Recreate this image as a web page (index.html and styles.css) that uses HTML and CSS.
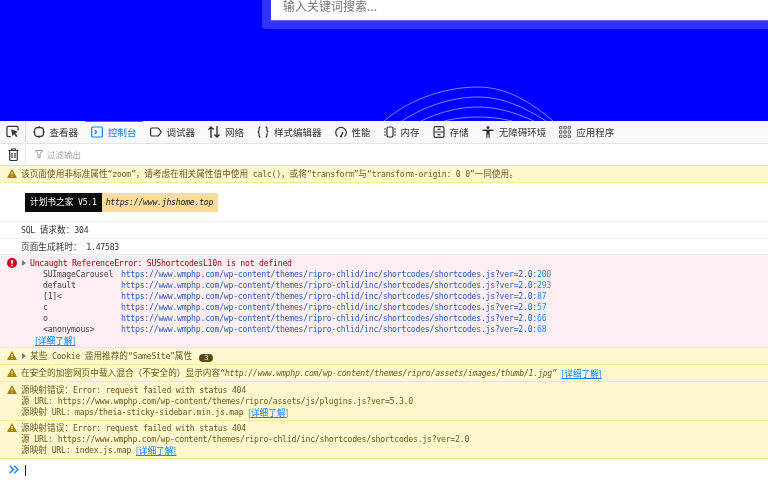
FILE: index.html
```html
<!DOCTYPE html>
<html lang="zh-CN">
<head>
<meta charset="utf-8">
<title>控制台</title>
<link rel="stylesheet" href="styles.css">
</head>
<body>
<section class="hero">
  <div class="search-band"><div class="search-box">输入关键词搜索...</div></div>
  <svg class="arcs" viewBox="0 0 180 36" width="180" height="36" fill="none">
    <path d="M0 36 C28 12 65 2 94 2 C123 2 148 18 169 36"/>
    <path d="M18 36 C42 20 70 12 94 12 C118 12 140 22 162 36"/>
    <path d="M37 36 C55 27 76 22 94 22 C112 22 130 27 150 36"/>
    <path d="M60 36 C72 33 84 32 94 32 C104 32 116 33 128 36"/>
  </svg>
</section>

<nav class="tabs">
  <div class="picker">
    <svg class="ic" viewBox="0 0 14 14" fill="none" stroke="#333" stroke-width="1.3"><path d="M5 12.5H2.5a1.5 1.5 0 0 1-1.5-1.5V3a1.5 1.5 0 0 1 1.5-1.5h9A1.5 1.5 0 0 1 13 3v3"/><path d="M5.5 4.5l7.5 3-3 1.2 2.5 3.3-1.5 1-2.3-3.3-1.7 2.3z" fill="#333" stroke="none"/></svg>
  </div>
  <div class="tab"><svg class="ic" viewBox="0 0 12 12" fill="none" stroke="#333" stroke-width="1.2"><rect x="1.6" y="1.6" width="8.8" height="8.8" rx="2.6"/><path d="M6 0v1.6M6 10.4V12M0 6h1.6M10.4 6H12"/></svg><span>查看器</span></div>
  <div class="tab on"><svg class="ic" viewBox="0 0 12 12" fill="none" stroke="#0a84ff" stroke-width="1.2"><rect x=".6" y="1" width="10.8" height="10" rx="1.6"/><path d="M3.6 4l2 2-2 2"/></svg><span>控制台</span></div>
  <div class="tab"><svg class="ic" viewBox="0 0 12 12" fill="none" stroke="#333" stroke-width="1.2"><path d="M1.8 2h5.7a1.5 1.5 0 0 1 1.1.5L11.2 6 8.6 9.5a1.5 1.5 0 0 1-1.1.5H1.8A1.2 1.2 0 0 1 .6 8.8V3.2A1.2 1.2 0 0 1 1.8 2z"/></svg><span>调试器</span></div>
  <div class="tab"><svg class="ic" viewBox="0 0 12 12" fill="none" stroke="#333" stroke-width="1.4"><path d="M3 12V1M.4 3.6L3 1l2.6 2.6M9 0v11M6.4 8.4L9 11l2.6-2.6"/></svg><span>网络</span></div>
  <div class="tab"><svg class="ic" viewBox="0 0 12 12" fill="none" stroke="#333" stroke-width="1.2"><path d="M3.5.8C2 .8 2 1.8 2 3v1.6C2 5.4 1.4 6 .6 6c.8 0 1.4.6 1.4 1.4V9c0 1.2 0 2.2 1.5 2.2M8.5.8C10 .8 10 1.8 10 3v1.6c0 .8.6 1.4 1.4 1.4-.8 0-1.4.6-1.4 1.4V9c0 1.2 0 2.2-1.5 2.2"/></svg><span>样式编辑器</span></div>
  <div class="tab"><svg class="ic" viewBox="0 0 12 12" fill="none" stroke="#333" stroke-width="1.2"><path d="M2.4 10.6A5.3 5.3 0 1 1 9.6 10.6"/><path d="M6 10.4L7.8 6" stroke-width="1.4"/><circle cx="6" cy="10.4" r="1" fill="#333" stroke="none"/></svg><span>性能</span></div>
  <div class="tab"><svg class="ic" viewBox="0 0 12 12" fill="none" stroke="#333" stroke-width="1.2"><rect x="3" y="1" width="6" height="10" rx="1.6"/><path d="M0 3h2M0 6h2M0 9h2M10 3h2M10 6h2M10 9h2" stroke-width=".9"/></svg><span>内存</span></div>
  <div class="tab"><svg class="ic" viewBox="0 0 12 12" fill="none" stroke="#333" stroke-width="1.2"><rect x="1" y=".6" width="10" height="10.8" rx="1.6"/><path d="M1 6h10M4.5 3.3h3M4.5 8.7h3"/></svg><span>存储</span></div>
  <div class="tab"><svg class="ic" viewBox="0 0 12 12" fill="#333"><circle cx="6" cy="1.6" r="1.5"/><path d="M.6 3.6h10.8v1.3H7.6V12H6.5V8.4h-1V12H4.4V4.9H.6z"/></svg><span>无障碍环境</span></div>
  <div class="tab"><svg class="ic" viewBox="0 0 12 12" fill="none" stroke="#666" stroke-width="1"><path d="M.5.5h2.4v2.4H.5zM4.8.5h2.4v2.4H4.8zM9.1.5h2.4v2.4H9.100zM.5 4.800h2.400v2.400H.5zM4.800 4.800h2.400v2.400H4.800zM9.100 4.800h2.400v2.400H9.100zM.5 9.100h2.400v2.400H.5zM4.800 9.100h2.400v2.400H4.800zM9.100 9.100h2.400v2.400H9.100z"/></svg><span>应用程序</span></div>
</nav>

<div class="filterbar">
  <div class="trash">
    <svg width="11" height="13" viewBox="0 0 11 13" fill="none" stroke="#333" stroke-width="1.2"><path d="M.5 2.500h10M3.500 2.500V1h4v1.500M1.700 2.500v8.800a1.200 1.200 0 0 0 1.200 1.200h5.200a1.200 1.200 0 0 0 1.200-1.200V2.500M4 5v5M7 5v5"/></svg>
  </div>
  <div class="filter">
    <svg width="8" height="9" viewBox="0 0 8 9" fill="none" stroke="#999" stroke-width="1"><path d="M.5.500h7L5 4v4L3 7V4z"/></svg>
    <span>过滤输出</span>
  </div>
</div>

<main class="console">
  <div class="row warn">
    <svg class="tri" viewBox="0 0 10 9"><path d="M5 0l5 9H0z"/><path class="mark" d="M4.500 3h1v3h-1zM4.500 6.800h1v1h-1z"/></svg>
    <div class="msg"><span class="z">该页面使用非标准属性</span>“zoom”<span class="z">，请考虑在相关属性值中使用</span> calc()<span class="z">，或将</span>“transform”<span class="z">与</span>“transform-origin: 0 0”<span class="z">一同使用。</span></div>
  </div>

  <div class="row banner">
    <span class="brand"><span class="z">计划书之家</span> V5.1</span><span class="site">https://www.jhshome.top</span>
  </div>
  <div class="row log"><div class="msg">SQL <span class="z">请求数：</span>304</div></div>
  <div class="row log short"><div class="msg"><span class="z">页面生成耗时：</span> 1.47583</div></div>

  <div class="row err">
    <svg class="tri" viewBox="0 0 10 10"><circle cx="5" cy="5" r="5" fill="#d70022"/><path d="M4.200 2h1.600v3.800H4.200zM4.200 6.800h1.600v1.500H4.200z" fill="#fff"/></svg>
    <span class="arrow"></span>
    <div class="msg">
      <div>Uncaught ReferenceError: SUShortcodesL10n is not defined</div>
      <div class="frames">
        <span class="fn">SUImageCarousel</span><span class="url">https://www.wmphp.com/wp-content/themes/ripro-chlid/inc/shortcodes/shortcodes.js?ver=2.0:<em>200</em></span>
        <span class="fn">default</span><span class="url">https://www.wmphp.com/wp-content/themes/ripro-chlid/inc/shortcodes/shortcodes.js?ver=2.0:<em>293</em></span>
        <span class="fn">[1]&lt;</span><span class="url">https://www.wmphp.com/wp-content/themes/ripro-chlid/inc/shortcodes/shortcodes.js?ver=2.0:<em>87</em></span>
        <span class="fn">c</span><span class="url">https://www.wmphp.com/wp-content/themes/ripro-chlid/inc/shortcodes/shortcodes.js?ver=2.0:<em>57</em></span>
        <span class="fn">o</span><span class="url">https://www.wmphp.com/wp-content/themes/ripro-chlid/inc/shortcodes/shortcodes.js?ver=2.0:<em>66</em></span>
        <span class="fn">&lt;anonymous&gt;</span><span class="url">https://www.wmphp.com/wp-content/themes/ripro-chlid/inc/shortcodes/shortcodes.js?ver=2.0:<em>68</em></span>
      </div>
      <div class="learn"><a class="more z">[详细了解]</a></div>
    </div>
  </div>

  <div class="row warn">
    <svg class="tri" viewBox="0 0 10 9"><path d="M5 0l5 9H0z"/><path class="mark" d="M4.500 3h1v3h-1zM4.500 6.800h1v1h-1z"/></svg>
    <span class="arrow"></span>
    <div class="msg"><span class="z">某些</span> Cookie <span class="z">滥用推荐的</span>“SameSite”<span class="z">属性</span><span class="badge">3</span></div>
  </div>
  <div class="row warn">
    <svg class="tri" viewBox="0 0 10 9"><path d="M5 0l5 9H0z"/><path class="mark" d="M4.500 3h1v3h-1zM4.500 6.800h1v1h-1z"/></svg>
    <div class="msg"><span class="z">在安全的加密网页中载入混合（不安全的）显示内容</span><i>“http://www.wmphp.com/wp-content/themes/ripro/assets/images/thumb/1.jpg”</i> <a class="more z">[详细了解]</a></div>
  </div>
  <div class="row warn tall">
    <svg class="tri" viewBox="0 0 10 9"><path d="M5 0l5 9H0z"/><path class="mark" d="M4.500 3h1v3h-1zM4.500 6.800h1v1h-1z"/></svg>
    <div class="msg">
      <div><span class="z">源映射错误：</span>Error: request failed with status 404</div>
      <div><span class="z">源</span> URL: https://www.wmphp.com/wp-content/themes/ripro/assets/js/plugins.js?ver=5.3.0</div>
      <div><span class="z">源映射</span> URL: maps/theia-sticky-sidebar.min.js.map <a class="more z">[详细了解]</a></div>
    </div>
  </div>
  <div class="row warn tall">
    <svg class="tri" viewBox="0 0 10 9"><path d="M5 0l5 9H0z"/><path class="mark" d="M4.500 3h1v3h-1zM4.500 6.800h1v1h-1z"/></svg>
    <div class="msg">
      <div><span class="z">源映射错误：</span>Error: request failed with status 404</div>
      <div><span class="z">源</span> URL: https://www.wmphp.com/wp-content/themes/ripro-chlid/inc/shortcodes/shortcodes.js?ver=2.0</div>
      <div><span class="z">源映射</span> URL: index.js.map <a class="more z">[详细了解]</a></div>
    </div>
  </div>

  <div class="prompt">
    <svg width="10" height="9" viewBox="0 0 10 9" fill="none" stroke="#0a84ff" stroke-width="1.400"><path d="M.7.700L4.500 4.500.7 8.300M5.200.700L9 4.500 5.200 8.300"/></svg>
    <span class="caret"></span>
  </div>
</main>
</body>
</html>
```

FILE: styles.css
```css
* { box-sizing: border-box; }

html, body {
  margin: 0;
  height: 100%;
  overflow: hidden;
  background: #fff;
}

body {
  font-family: "Noto Sans CJK SC", "Noto Sans", sans-serif;
  filter: blur(0.35px);
}

.hero {
  position: relative;
  height: 121px;
  background: #0000ff;
  overflow: hidden;
}

.search-band {
  margin-left: 262px;
  padding: 0 0 8px 9px;
  background: #3333ff;
  border-bottom-left-radius: 4px;
}

.search-box {
  height: 21px;
  padding-left: 12px;
  background: #fff;
  border-bottom: 1px solid #6a6aff;
  color: #777;
  font-size: 12px;
  line-height: 12px;
}

.arcs {
  position: absolute;
  left: 384px;
  bottom: 0;
}

.arcs path {
  stroke: rgba(255, 255, 255, 0.5);
  stroke-width: 1;
}

.tabs {
  display: flex;
  height: 23px;
  padding-bottom: 1px;
  background: #f9f9fa;
  border-bottom: 1px solid #e4e4e6;
  color: #333;
  font-size: 9.5px;
}

.picker {
  display: flex;
  align-items: center;
  width: 26px;
  padding-left: 6px;
  border-right: 1px solid #e0e0e2;
}

.picker .ic { width: 13px; height: 13px; }

.tab {
  display: flex;
  align-items: center;
  gap: 5px;
  padding: 0 6.5px;
  border-top: 1px solid transparent;
  white-space: nowrap;
}

.tab.on {
  border-top: 1px solid #0a84ff;
  color: #0a84ff;
}

.ic {
  flex: none;
  width: 12px;
  height: 12px;
}

.filterbar {
  display: flex;
  height: 22px;
  padding-bottom: 1px;
  border-bottom: 1px solid #e0e0e2;
  background: #fff;
}

.trash {
  display: flex;
  align-items: center;
  width: 26px;
  padding-left: 8px;
  border-right: 1px solid #e8e8ea;
}

.filter {
  display: flex;
  align-items: center;
  gap: 4px;
  padding-left: 9px;
  color: #aaa;
  font-size: 8.5px;
}

.console {
  font-family: "DejaVu Sans Mono", "Liberation Mono", monospace;
  font-size: 8.2px;
  letter-spacing: -0.255px;
  line-height: 11px;
}

.z {
  font-family: "Noto Sans CJK SC", sans-serif;
  font-size: 8.67px;
  letter-spacing: 0;
  line-height: 0;
}

.row {
  position: relative;
  display: flex;
  padding: 3px 6px 2px 7px;
  border-bottom: 1px solid #f0f0f1;
  white-space: nowrap;
}

.msg {
  min-width: 0;
}

.tri {
  flex: none;
  width: 10px;
  height: 9px;
  margin: 0 4px 0 0;
}

.tri path { fill: #a47f00; }
.tri path.mark { fill: #fffbd6; }
.err .tri { height: 10px; }
.err .tri path { fill: #fff; }

.warn {
  background: #fff8cf;
  border-bottom-color: #f5e9a2;
  color: #6f5a1c;
}

.tall {
  padding-top: 2.5px;
  padding-bottom: 2px;
}

.log {
  color: #333;
  padding-left: 21px;
}

.short { padding-bottom: 1px; }

.banner {
  padding: 10px 0 9px 25px;
}

.brand,
.site {
  height: 19px;
  line-height: 19px;
  padding: 0 5px;
}

.brand {
  background: #0a0a0a;
  color: #fff;
}

.site {
  background: #fbdc9e;
  color: #222;
  font-style: italic;
  padding: 0 5px 0 4px;
}

.err {
  padding-top: 3px;
  padding-bottom: 1px;
  background: #fdeff3;
  border-bottom-color: #f8dfe5;
  color: #a4000f;
}

.arrow {
  flex: none;
  align-self: flex-start;
  width: 0;
  height: 0;
  margin: 2px 4px 0 1px;
  border-left: 4px solid #777;
  border-top: 3px solid transparent;
  border-bottom: 3px solid transparent;
}

.frames {
  display: grid;
  grid-template-columns: 78px auto;
  justify-content: start;
  padding-left: 13px;
  color: #444;
}

.url { color: #2a5fb8; }
.url em { color: #1d8cf5; font-style: normal; }

.more {
  display: inline-block;
  vertical-align: top;
  line-height: 10px;
  color: #0a84ff;
  text-decoration: underline;
}

.learn {
  margin-left: 5px;
}

.badge {
  display: inline-block;
  width: 14px;
  height: 8px;
  margin-left: 7px;
  border-radius: 4px;
  background: #5c4a10;
  color: #fff;
  font-size: 7px;
  line-height: 8px;
  text-align: center;
  vertical-align: -0.5px;
}

.prompt {
  display: flex;
  align-items: flex-start;
  height: 30px;
  padding: 6px 0 0 9px;
}

.caret {
  width: 1px;
  height: 11px;
  margin-left: 6px;
  background: #222;
}
```
